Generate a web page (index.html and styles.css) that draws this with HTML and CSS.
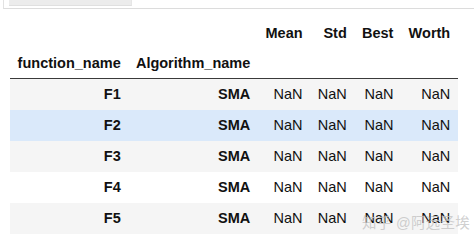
FILE: index.html
```html
<!DOCTYPE html>
<html>
<head>
<meta charset="utf-8">
<link rel="stylesheet" href="styles.css">
</head>
<body>
<div class="topbox"><div class="topstrip"></div></div>
<div class="wrap">
<table class="df">
<thead>
<tr class="hrow"><th></th><th></th><th>Mean</th><th>Std</th><th>Best</th><th>Worth</th></tr>
<tr class="hrow names"><th>function_name</th><th>Algorithm_name</th><th></th><th></th><th></th><th></th></tr>
</thead>
<tbody>
<tr class="odd"><th>F1</th><th>SMA</th><td>NaN</td><td>NaN</td><td>NaN</td><td>NaN</td></tr>
<tr class="hover"><th>F2</th><th>SMA</th><td>NaN</td><td>NaN</td><td>NaN</td><td>NaN</td></tr>
<tr class="odd"><th>F3</th><th>SMA</th><td>NaN</td><td>NaN</td><td>NaN</td><td>NaN</td></tr>
<tr><th>F4</th><th>SMA</th><td>NaN</td><td>NaN</td><td>NaN</td><td>NaN</td></tr>
<tr class="odd"><th>F5</th><th>SMA</th><td>NaN</td><td>NaN</td><td>NaN</td><td>NaN</td></tr>
</tbody>
</table>
<div class="watermark">知乎 @阿远圣埃</div>
</div>
</body>
</html>
```
FILE: styles.css
```css
html, body {
  margin: 0;
  padding: 0;
  background: #fff;
}
body {
  font-family: "Liberation Sans", Arial, "Noto Sans CJK SC", sans-serif;
  color: #111;
}
.topbox {
  margin-left: 3px;
  height: 9px;
  border-left: 1px solid #e2e2e2;
  border-bottom: 1px solid #dcdcdc;
  box-sizing: border-box;
}
.topstrip {
  margin-left: 5px;
  width: 122px;
  height: 5px;
  background: #ececec;
  border-bottom: 1px solid #e0e0e0;
  border-right: 1px solid #e6e6e6;
}
.wrap {
  position: relative;
  margin: 9px 0 0 10px;
}
.df {
  border-collapse: collapse;
  border: none;
  font-size: 14.5px;
}
.df th, .df td {
  padding: 7px 7.6px;
  line-height: 17px;
  text-align: right;
  white-space: nowrap;
  vertical-align: middle;
}
.df th {
  font-weight: bold;
}
.df td {
  font-weight: normal;
}
.df thead th {
  line-height: 16px;
}
.df thead tr.names th {
  border-bottom: 1px solid #3a3a3a;
}
.df tbody tr.odd {
  background: #f5f5f5;
}
.df tbody tr.hover {
  background: #dae9fa;
}
.watermark {
  position: absolute;
  left: 352px;
  top: 193px;
  font-size: 14.5px;
  white-space: nowrap;
  color: rgba(195, 195, 195, 0.8);
  letter-spacing: 0.3px;
}
```
